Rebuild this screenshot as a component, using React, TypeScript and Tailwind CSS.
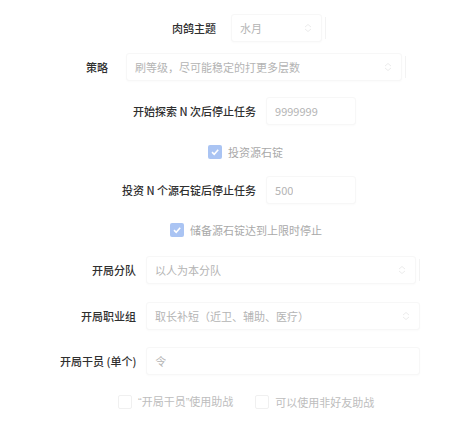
import React from "react";

const font = { fontFamily: '"Noto Sans CJK SC", "Noto Sans", sans-serif' };

const Chevron = () => (
  <svg width="10" height="10" viewBox="0 0 10 10" className="text-[#ececec]">
    <path d="M2 4 L5 1.5 L8 4 M2 6 L5 8.5 L8 6" fill="none" stroke="currentColor" strokeWidth="1" />
  </svg>
);

const Box: React.FC<{ w: string; text: string; select?: boolean; tail?: boolean }> = ({ w, text, select, tail }) => (
  <div className="flex items-center">
    <div
      className={`${w} h-[28px] flex items-center justify-between pl-2 pr-2 rounded-[3px] border border-[#f7f7f7] shadow-[0_1px_2px_rgba(0,0,0,0.02)] bg-white`}
    >
      <span className="text-[11px] text-[#b4b4b4] truncate">{text}</span>
      {select && <Chevron />}
    </div>
    {tail && <div className="w-px h-[22px] bg-[#f3f3f3] ml-[3px]" />}
  </div>
);

const Check: React.FC<{ checked?: boolean }> = ({ checked }) =>
  checked ? (
    <div className="w-[14px] h-[14px] rounded-[2px] bg-[#aac4f3] flex items-center justify-center">
      <svg width="10" height="10" viewBox="0 0 10 10">
        <path d="M2 5.2 L4.2 7.3 L8.2 2.8" fill="none" stroke="white" strokeWidth="1.6" />
      </svg>
    </div>
  ) : (
    <div className="w-[14px] h-[14px] rounded-[2px] border border-[#f0f0f0] bg-white" />
  );

const Label: React.FC<{ children: React.ReactNode }> = ({ children }) => (
  <span className="text-[11px] font-medium text-[#2f2f2f] whitespace-nowrap">{children}</span>
);

const quote = { fontFamily: '"Liberation Sans", sans-serif' };

export default function App() {
  return (
    <div className="w-[474px] h-[428px] bg-white overflow-hidden" style={font}>
      <div className="flex flex-col pt-[13px]">
        <div className="flex items-center h-[30px] pl-[172px] gap-[15px]">
          <Label>肉鸽主题</Label>
          <Box w="w-[91px]" text="水月" select tail />
        </div>
        <div className="flex items-center h-[28px] mt-[10px] pl-[86px] gap-[18px]">
          <Label>策略</Label>
          <Box w="w-[276px]" text="刷等级，尽可能稳定的打更多层数" select tail />
        </div>
        <div className="flex items-center h-[28px] mt-[16px] pl-[133px] gap-[10px]">
          <Label>开始探索 N 次后停止任务</Label>
          <Box w="w-[90px]" text="9999999" />
        </div>
        <div className="flex items-center h-[20px] mt-[17px] pl-[208px] gap-[6px]">
          <Check checked />
          <span className="text-[11px] text-[#a9a9a9]">投资源石锭</span>
        </div>
        <div className="flex items-center h-[28px] mt-[14px] pl-[122px] gap-[10px]">
          <Label>投资 N 个源石锭后停止任务</Label>
          <Box w="w-[90px]" text="500" />
        </div>
        <div className="flex items-center h-[20px] mt-[16px] pl-[170px] gap-[6px]">
          <Check checked />
          <span className="text-[11px] text-[#a9a9a9]">储备源石锭达到上限时停止</span>
        </div>
        <div className="flex items-center h-[28px] mt-[16px] pl-[92px] gap-[10px]">
          <Label>开局分队</Label>
          <Box w="w-[270px]" text="以人为本分队" select tail />
        </div>
        <div className="flex items-center h-[28px] mt-[18px] pl-[81px] gap-[10px]">
          <Label>开局职业组</Label>
          <Box w="w-[274px]" text="取长补短（近卫、辅助、医疗）" select />
        </div>
        <div className="flex items-center h-[28px] mt-[17px] pl-[60px] gap-[10px]">
          <Label>开局干员 (单个)</Label>
          <Box w="w-[274px]" text="令" />
        </div>
        <div className="flex items-center h-[20px] mt-[17px] pl-[118px] gap-[6px]">
          <Check />
          <span className="text-[11px] text-[#bdbdbd]">
            <span style={quote}>“</span>开局干员<span style={quote}>”</span>使用助战
          </span>
          <div className="w-[10px]" />
          <Check />
          <span className="text-[11px] text-[#bdbdbd]">可以使用非好友助战</span>
        </div>
      </div>
    </div>
  );
}
